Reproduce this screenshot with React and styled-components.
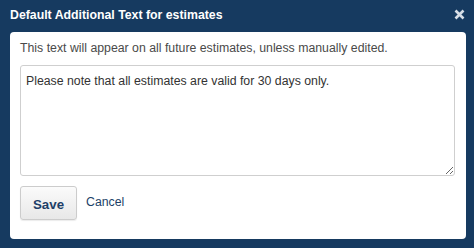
import React from "react";
import styled, { createGlobalStyle } from "styled-components";

const Global = createGlobalStyle`
  html, body { margin: 0; padding: 0; background: #163a60; }
  body { font-family: "Liberation Sans", Arial, sans-serif; }
`;

const Dialog = styled.div`
  width: 474px;
  height: 248px;
  box-sizing: border-box;
  background: #163a60;
  display: flex;
  flex-direction: column;
  padding: 0 8px 9px 10px;
`;

const Header = styled.div`
  height: 32px;
  display: flex;
  align-items: center;
  justify-content: space-between;
  padding-bottom: 3px;
  box-sizing: border-box;
`;

const Title = styled.h1`
  margin: 0;
  font-size: 12.3px;
  font-weight: bold;
  color: #ffffff;
`;

const Close = styled.button`
  border: none;
  background: none;
  padding: 0;
  margin-right: 0px;
  width: 14px;
  height: 14px;
  display: flex;
  align-items: center;
  justify-content: center;
  cursor: pointer;
`;

const Panel = styled.div`
  flex: 1;
  background: #ffffff;
  border-radius: 4px;
  padding: 8px 11px 0 10px;
  display: flex;
  flex-direction: column;
`;

const Hint = styled.p`
  margin: 0 0 8px;
  font-size: 12.3px;
  line-height: 17px;
  color: #4a4a4a;
`;

const Area = styled.textarea`
  width: 100%;
  height: 111px;
  box-sizing: border-box;
  border: 1px solid #cfcfcf;
  border-radius: 3px;
  padding: 7px 5px;
  font-family: "Liberation Sans", Arial, sans-serif;
  font-size: 12.3px;
  line-height: 16px;
  color: #333;
  resize: both;
  outline: none;
  margin: 0;
  display: block;
`;

const Actions = styled.div`
  display: flex;
  align-items: center;
  gap: 9px;
  margin-top: 10px;
`;

const SaveButton = styled.button`
  width: 57px;
  height: 34px;
  border: 1px solid #cccccc;
  border-radius: 3px;
  background: linear-gradient(#fbfbfb, #e8e8e8);
  box-shadow: 0 1px 1px rgba(0,0,0,0.08);
  font-family: "Liberation Sans", Arial, sans-serif;
  font-size: 13.3px;
  font-weight: bold;
  color: #1d3f68;
  padding: 0;
  padding-top: 2px;
`;

const CancelLink = styled.a`
  font-size: 12.3px;
  color: #1d3f68;
  text-decoration: none;
  margin-top: -2px;
`;

export default function App() {
  return (
    <>
      <Global />
      <Dialog>
        <Header>
          <Title>Default Additional Text for estimates</Title>
          <Close aria-label="Close">
            <svg width="11" height="11" viewBox="0 0 11 11">
              <path d="M1.5 1.5 L9.5 9.5 M9.5 1.5 L1.5 9.5" stroke="#d6dde6" strokeWidth="2.6" strokeLinecap="butt" />
            </svg>
          </Close>
        </Header>
        <Panel>
          <Hint>This text will appear on all future estimates, unless manually edited.</Hint>
          <Area defaultValue="Please note that all estimates are valid for 30 days only." />
          <Actions>
            <SaveButton>Save</SaveButton>
            <CancelLink href="#">Cancel</CancelLink>
          </Actions>
        </Panel>
      </Dialog>
    </>
  );
}
